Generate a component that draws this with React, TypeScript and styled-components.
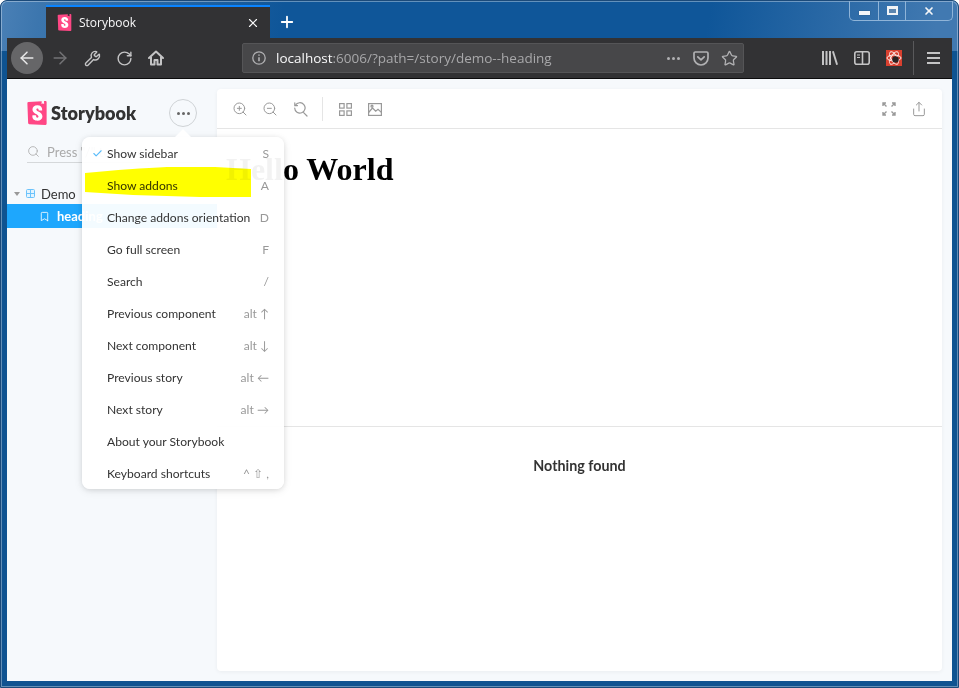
import React from 'react';
import styled, { createGlobalStyle } from 'styled-components';
import { SiStorybook } from 'react-icons/si';
import { ArrowLeft, ArrowRight, Wrench, RotateCw, Star, Search, ZoomIn, ZoomOut, Check, Bookmark, Share, X, Plus } from 'lucide-react';

const Global = createGlobalStyle`
  html, body { margin: 0; padding: 0; background: #fff; }
  body { font-family: "Open Sans", "Noto Sans", sans-serif; }
  * { box-sizing: border-box; }
`;

const sbFont = `"Lato", "Open Sans", sans-serif`;

const Window = styled.div`
  position: relative;
  width: 959px;
  height: 688px;
  display: flex;
  flex-direction: column;
  padding: 0 6px 6px;
  border: 1px solid #1b4a7a;
  border-radius: 7px 7px 0 0;
  background:
    linear-gradient(100deg, #4a80b6 0, #3c76ae 40px, #0f5699 280px, #0f5699 700px, #4179b1 925px) top / 100% 50px no-repeat,
    #0f5391;
  box-shadow: inset 0 0 0 1px rgba(255, 255, 255, 0.35);
`;

const TitleBar = styled.div`
  height: 37px;
  flex: none;
  display: flex;
  align-items: flex-end;
`;

const Tab = styled.div`
  width: 224px;
  height: 33px;
  margin-left: 39px;
  padding: 0 10px 0 10px;
  display: flex;
  align-items: center;
  gap: 6px;
  border-top: 2px solid #0a84ff;
  background: #323234;
  color: #f9f9fa;
  font-size: 12px;
`;

const TabTitle = styled.span`
  flex: 1;
`;

const NewTab = styled.div`
  width: 34px;
  height: 33px;
  display: flex;
  align-items: center;
  justify-content: center;
  color: #fff;
`;

const WinControls = styled.div`
  align-self: flex-start;
  margin: 0 -1px 0 auto;
  height: 20px;
  display: flex;
  border: 1px solid #8fb4d8;
  border-top: none;
  border-radius: 0 0 5px 5px;
  overflow: hidden;
`;

const WinButton = styled.div<{ $w: number }>`
  width: ${p => p.$w}px;
  display: flex;
  align-items: center;
  justify-content: center;
  border-left: 1px solid #8fb4d8;
  &:first-child { border-left: none; }
`;

const MinGlyph = styled.div`
  width: 11px;
  height: 4px;
  margin-top: 4px;
  background: #f4f6f8;
  box-shadow: 0 0 1px #234;
`;

const MaxGlyph = styled.div`
  width: 11px;
  height: 9px;
  border: 2px solid #f0f3f6;
  border-top-width: 3px;
  background: #5c86b0;
`;

const CloseGlyph = styled.span`
  display: flex;
  color: #f4f6f8;
`;

const Nav = styled.div`
  height: 41px;
  flex: none;
  display: flex;
  align-items: center;
  padding-left: 4px;
  background: #323234;
  border-bottom: 1px solid #0c0c0d;
  color: #c4c4c5;
`;

const BackButton = styled.div`
  width: 32px;
  height: 32px;
  margin-right: 1px;
  display: flex;
  align-items: center;
  justify-content: center;
  border-radius: 50%;
  background: #666668;
  color: #e8e8e8;
`;

const NavButton = styled.div<{ $dim?: boolean }>`
  width: 32px;
  height: 32px;
  flex: none;
  display: flex;
  align-items: center;
  justify-content: center;
  color: ${p => (p.$dim ? '#737375' : '#c4c4c5')};
`;

const UrlBar = styled.div`
  width: 502px;
  height: 30px;
  margin: 0 70px 0 70px;
  padding: 0 0 0 9px;
  display: flex;
  align-items: center;
  background: #474749;
  border: 1px solid #555557;
  border-radius: 2px;
  color: #b1b1b3;
`;

const UrlText = styled.div`
  flex: 1;
  margin-left: 10px;
  font-size: 13.5px;
  color: #a8a8aa;
  white-space: nowrap;
`;

const UrlHost = styled.span`
  color: #f9f9fa;
`;

const UrlAction = styled.div`
  width: 28px;
  display: flex;
  justify-content: center;
  color: #b1b1b3;
`;

const NavSep = styled.div`
  width: 1px;
  height: 34px;
  margin: 0 3px;
  background: #59595b;
`;

const Content = styled.div`
  position: relative;
  flex: 1;
  min-height: 0;
  display: flex;
  background: #f6f9fc;
`;

const Sidebar = styled.div`
  width: 210px;
  flex: none;
  padding-top: 20px;
  display: flex;
  flex-direction: column;
  font-family: ${sbFont};
`;

const Brand = styled.div`
  height: 28px;
  padding: 0 20px 0 18px;
  display: flex;
  align-items: center;
`;

const LogoMark = styled.div<{ $size: number }>`
  width: ${p => p.$size}px;
  height: ${p => p.$size}px;
  flex: none;
  display: flex;
  color: #ff4785;
  background: linear-gradient(#fff, #fff) center / 60% 80% no-repeat;
`;

const BrandName = styled.div`
  flex: 1;
  margin-left: 2px;
  font-family: ${sbFont};
  font-weight: 800;
  font-size: 18.1px;
  color: #333;
`;

const DotsButton = styled.div`
  width: 28px;
  height: 28px;
  display: flex;
  align-items: center;
  justify-content: center;
  gap: 2px;
  border: 1px solid #cfd3d6;
  border-radius: 50%;
`;

const Dot = styled.i<{ $color?: string }>`
  width: 3px;
  height: 3px;
  border-radius: 50%;
  background: ${p => p.$color ?? '#666'};
`;

const DotRow = styled.div`
  display: flex;
  gap: 2px;
`;

const SearchBox = styled.div`
  height: 24px;
  margin: 12px 20px 0;
  padding-top: 2px;
  display: flex;
  align-items: center;
  gap: 7px;
  border-bottom: 1px solid #d5d8da;
  color: #aaa;
  font-size: 13px;
  white-space: nowrap;
`;

const TreeGroup = styled.div`
  height: 23px;
  margin-top: 18px;
  padding: 2px 0 0 7px;
  display: flex;
  align-items: center;
  font-size: 13px;
  color: #333;
`;

const Caret = styled.div`
  width: 0;
  height: 0;
  margin-right: 6px;
  border: 3px solid transparent;
  border-top: 4px solid #999;
  border-bottom: none;
`;

const ComponentSlot = styled.div`
  display: flex;
  margin-right: 6px;
`;

const TreeItem = styled.div`
  height: 24px;
  padding-left: 32px;
  display: flex;
  align-items: center;
  gap: 7px;
  background: #1ea7fd;
  color: #fff;
  font-size: 13px;
  font-weight: 700;
`;

const Card = styled.div`
  flex: 1;
  margin: 10px 10px 10px 0;
  display: flex;
  flex-direction: column;
  background: #fff;
  border-radius: 4px;
  box-shadow: 0 1px 4px rgba(0, 0, 0, 0.05);
  overflow: hidden;
`;

const Toolbar = styled.div`
  height: 40px;
  flex: none;
  padding: 1px 8px 0;
  display: flex;
  align-items: center;
  border-bottom: 1px solid #e5e5e5;
  color: #999;
`;

const ToolButton = styled.div`
  width: 30px;
  height: 30px;
  display: flex;
  align-items: center;
  justify-content: center;
`;

const ToolSep = styled.div`
  width: 1px;
  height: 24px;
  margin: 0 7px;
  background: #e5e5e5;
`;

const ToolSpacer = styled.div`
  flex: 1;
`;

const Story = styled.div`
  height: 298px;
  flex: none;
  padding: 22px 0 0 9px;
  border-bottom: 1px solid #e5e5e5;
`;

const Heading = styled.h1`
  margin: 0;
  font-family: "Liberation Serif", serif;
  font-size: 32px;
  line-height: 37px;
  font-weight: 700;
  color: #000;
`;

const Addons = styled.div`
  flex: 1;
  padding-top: 29px;
  text-align: center;
  font-family: ${sbFont};
  font-size: 14.3px;
  line-height: 20px;
  font-weight: 700;
  color: #333;
`;

const Menu = styled.div`
  position: absolute;
  left: 75px;
  top: 58px;
  width: 202px;
  background: rgba(255, 255, 255, 0.95);
  border-radius: 8px;
  box-shadow: 0 1px 5px rgba(0, 0, 0, 0.1), 0 2px 10px rgba(0, 0, 0, 0.08);
  font-family: ${sbFont};
  &::before {
    content: '';
    position: absolute;
    left: 93px;
    top: -8px;
    border: 8px solid transparent;
    border-top: none;
    border-bottom-color: rgba(255, 255, 255, 0.95);
  }
`;

const MenuRow = styled.div`
  height: 32px;
  padding: 0 15px 0 10px;
  display: flex;
  align-items: center;
  font-size: 12.1px;
  color: #333;
  white-space: nowrap;
`;

const CheckSlot = styled.div`
  width: 15px;
  flex: none;
  display: flex;
  color: #5bbcfa;
`;

const MenuLabel = styled.div`
  flex: 1;
`;

const Shortcut = styled.div`
  color: #999;
  font-size: 12.1px;
`;

const Highlight = styled.svg`
  position: absolute;
  left: 3px;
  top: 28px;
  mix-blend-mode: multiply;
`;

const rows: [string, string][] = [
  ['Show sidebar', 'S'],
  ['Show addons', 'A'],
  ['Change addons orientation', 'D'],
  ['Go full screen', 'F'],
  ['Search', '/'],
  ['Previous component', 'alt ↑'],
  ['Next component', 'alt ↓'],
  ['Previous story', 'alt ←'],
  ['Next story', 'alt →'],
  ['About your Storybook', ''],
  ['Keyboard shortcuts', '^ ⇧ ,'],
];

const HomeIcon = () => (
  <svg width="16" height="16" viewBox="0 0 16 16" fill="none" stroke="currentColor" strokeWidth="2" strokeLinejoin="round">
    <path d="M1 8 8 1.5 15 8" strokeLinecap="round" />
    <path d="M3 7v7.5h3.5V10h3v4.5H13V7" />
  </svg>
);

const InfoIcon = () => (
  <svg width="14" height="14" viewBox="0 0 14 14" fill="none" stroke="currentColor" strokeWidth="1.3">
    <circle cx="7" cy="7" r="6.2" />
    <path d="M7 6.2v4M7 3.4v1.4" strokeWidth="1.6" />
  </svg>
);

const PocketIcon = () => (
  <svg width="16" height="15" viewBox="0 0 16 15" fill="none" stroke="currentColor" strokeWidth="1.7" strokeLinecap="round" strokeLinejoin="round">
    <path d="M2.3 1h11.4c.7 0 1.3.6 1.3 1.3V7a7 7 0 0 1-14 0V2.3C1 1.6 1.6 1 2.3 1Z" />
    <path d="M4.8 5.8 8 8.9l3.2-3.1" />
  </svg>
);

const LibraryIcon = () => (
  <svg width="16" height="14" viewBox="0 0 16 14" fill="currentColor">
    <rect x="0" y="0" width="2" height="14" />
    <rect x="3.5" y="0" width="2" height="14" />
    <rect x="7" y="0" width="2" height="14" />
    <path d="M10 .6 11.8 0 16 13.4l-1.8.6Z" />
  </svg>
);

const SidebarIcon = () => (
  <svg width="16" height="14" viewBox="0 0 16 14" fill="none" stroke="currentColor" strokeWidth="1.6">
    <rect x=".8" y=".8" width="14.4" height="12.4" rx="2" />
    <path d="M8.5 1v12" />
    <path d="M3 4h3M3 6.5h3" strokeWidth="1.2" />
  </svg>
);

const AddonIcon = () => (
  <svg width="16" height="16" viewBox="0 0 16 16">
    <rect width="16" height="16" fill="#d9402f" />
    <g fill="none" stroke="#fbe9e6" strokeWidth="1">
      <ellipse cx="8" cy="8" rx="7" ry="3" />
      <ellipse cx="8" cy="8" rx="7" ry="3" transform="rotate(60 8 8)" />
      <ellipse cx="8" cy="8" rx="7" ry="3" transform="rotate(120 8 8)" />
    </g>
    <circle cx="9.5" cy="9.5" r="3.2" fill="#2b2323" />
  </svg>
);

const Hamburger = () => (
  <svg width="13" height="12" viewBox="0 0 13 12" fill="currentColor">
    <rect width="13" height="2" />
    <rect y="5" width="13" height="2" />
    <rect y="10" width="13" height="2" />
  </svg>
);

const ComponentIcon = () => (
  <svg width="9" height="9" viewBox="0 0 9 9" fill="none" stroke="#6cc3fb" strokeWidth="1">
    <rect x=".5" y=".5" width="8" height="8" rx="1" fill="#e4f4fe" />
    <path d="M4.5 .5v8M.5 4.5h8" />
  </svg>
);

const ZoomResetIcon = () => (
  <svg width="15" height="15" viewBox="0 0 15 15" fill="none" stroke="currentColor" strokeWidth="1.2" strokeLinecap="round">
    <path d="M2.4 3.3A5.2 5.2 0 1 1 1.7 6" />
    <path d="M1.8 .9v2.7h2.7M10.6 10.6 14 14" />
  </svg>
);

const GridIcon = () => (
  <svg width="13" height="13" viewBox="0 0 13 13" fill="none" stroke="currentColor" strokeWidth="1.2">
    <rect x=".6" y=".6" width="4.5" height="4.5" />
    <rect x="7.9" y=".6" width="4.5" height="4.5" />
    <rect x=".6" y="7.9" width="4.5" height="4.5" />
    <rect x="7.9" y="7.9" width="4.5" height="4.5" />
  </svg>
);

const PictureIcon = () => (
  <svg width="14" height="13" viewBox="0 0 14 13" fill="none" stroke="currentColor" strokeWidth="1.2">
    <rect x=".6" y=".6" width="12.8" height="11.8" />
    <path d="M.6 9.5 4.5 5l3.2 3.2L10 6.2l3.4 3.2" />
    <circle cx="4" cy="3.2" r="1" />
  </svg>
);

const FullIcon = () => (
  <svg width="14" height="14" viewBox="0 0 14 14" fill="none" stroke="currentColor" strokeWidth="1.4">
    <path d="M1 4V1h3M10 1h3v3M13 10v3h-3M4 13H1v-3M1 1l3.5 3.5M13 1 9.5 4.5M13 13 9.5 9.5M1 13l3.5-3.5" />
  </svg>
);

export default function App() {
  return (
    <>
      <Global />
      <Window>
        <TitleBar>
          <Tab>
            <LogoMark $size={17}><SiStorybook size={17} /></LogoMark>
            <TabTitle>Storybook</TabTitle>
            <X size={14} strokeWidth={2} />
          </Tab>
          <NewTab><Plus size={18} strokeWidth={2.4} /></NewTab>
          <WinControls>
            <WinButton $w={28}><MinGlyph /></WinButton>
            <WinButton $w={27}><MaxGlyph /></WinButton>
            <WinButton $w={47}><CloseGlyph><X size={12} strokeWidth={3.4} /></CloseGlyph></WinButton>
          </WinControls>
        </TitleBar>
        <Nav>
          <BackButton><ArrowLeft size={20} strokeWidth={1.8} /></BackButton>
          <NavButton $dim><ArrowRight size={20} strokeWidth={1.8} /></NavButton>
          <NavButton><Wrench size={17} strokeWidth={2} /></NavButton>
          <NavButton><RotateCw size={17} strokeWidth={2} /></NavButton>
          <NavButton><HomeIcon /></NavButton>
          <UrlBar>
            <InfoIcon />
            <UrlText><UrlHost>localhost</UrlHost>:6006/?path=/story/demo--heading</UrlText>
            <UrlAction><DotRow><Dot $color="#b1b1b3" /><Dot $color="#b1b1b3" /><Dot $color="#b1b1b3" /></DotRow></UrlAction>
            <UrlAction><PocketIcon /></UrlAction>
            <UrlAction><Star size={17} strokeWidth={1.8} /></UrlAction>
          </UrlBar>
          <NavButton><LibraryIcon /></NavButton>
          <NavButton><SidebarIcon /></NavButton>
          <NavButton><AddonIcon /></NavButton>
          <NavSep />
          <NavButton><Hamburger /></NavButton>
        </Nav>
        <Content>
          <Sidebar>
            <Brand>
              <LogoMark $size={24}><SiStorybook size={24} /></LogoMark>
              <BrandName>Storybook</BrandName>
              <DotsButton><Dot /><Dot /><Dot /></DotsButton>
            </Brand>
            <SearchBox><Search size={13} strokeWidth={1.5} />Press "/" to search</SearchBox>
            <TreeGroup><Caret /><ComponentSlot><ComponentIcon /></ComponentSlot>Demo</TreeGroup>
            <TreeItem><Bookmark size={11} strokeWidth={1.8} />heading</TreeItem>
          </Sidebar>
          <Card>
            <Toolbar>
              <ToolButton><ZoomIn size={16} strokeWidth={1.5} /></ToolButton>
              <ToolButton><ZoomOut size={16} strokeWidth={1.5} /></ToolButton>
              <ToolButton><ZoomResetIcon /></ToolButton>
              <ToolSep />
              <ToolButton><GridIcon /></ToolButton>
              <ToolButton><PictureIcon /></ToolButton>
              <ToolSpacer />
              <ToolButton><FullIcon /></ToolButton>
              <ToolButton><Share size={16} strokeWidth={1.5} /></ToolButton>
            </Toolbar>
            <Story><Heading>Hello World</Heading></Story>
            <Addons>Nothing found</Addons>
          </Card>
          <Menu>
            {rows.map(([label, key], i) => (
              <MenuRow key={label}>
                <CheckSlot>{i === 0 && <Check size={11} strokeWidth={2.4} />}</CheckSlot>
                <MenuLabel>{label}</MenuLabel>
                <Shortcut>{key}</Shortcut>
              </MenuRow>
            ))}
            <Highlight width="167" height="34" viewBox="0 0 167 34">
              <path d="M0 8C30 5 60 3 82 2L130 2 166 4 166 32 115 32 48 30 0 27Z" fill="#ffff00" />
            </Highlight>
          </Menu>
        </Content>
      </Window>
    </>
  );
}
